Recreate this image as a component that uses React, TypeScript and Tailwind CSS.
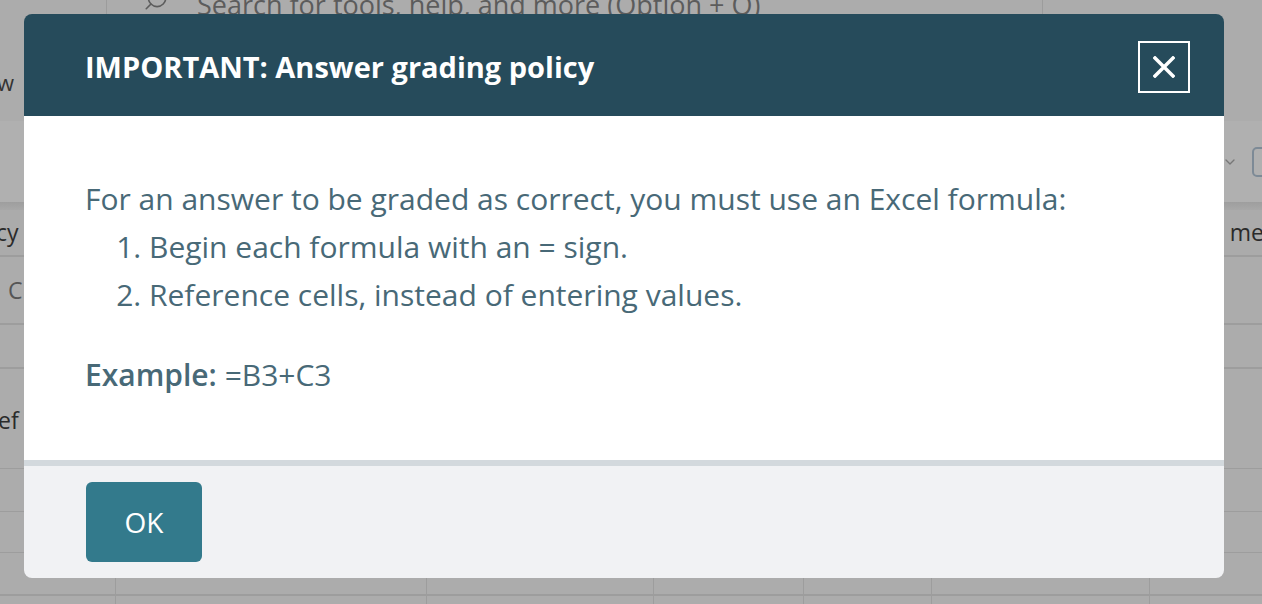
import { Search, ChevronDown } from 'lucide-react';

const font = { fontFamily: '"Open Sans", "Noto Sans", sans-serif' };

function CloseIcon() {
  return (
    <svg viewBox="0 0 22 22" className="h-[22px] w-[22px]" fill="none" stroke="currentColor" strokeWidth={3.5}>
      <path d="M2 2L20 20M20 2L2 20" strokeLinecap="square" />
    </svg>
  );
}

function Backdrop() {
  const cols = [115, 426, 653, 803, 931, 1149];
  return (
    <div className="flex h-[604px] w-full flex-col bg-[#acacac] text-[#2a2a2a]" style={{ fontFamily: '"Open Sans", sans-serif' }}>
      {/* top bar with search */}
      <div className="flex h-[121px] shrink-0">
        <div className="flex w-[107px] shrink-0 items-end border-r border-[#9c9c9c] pb-[22px]">
          <span className="-ml-[3px] text-[22px] text-[#333]">w</span>
        </div>
        <div className="flex h-[16px] w-[936px] shrink-0 items-end gap-[28px] border-r border-[#9c9c9c] pl-[36px]">
          <Search className="mb-[4px] h-[26px] w-[26px] -scale-x-100 text-[#5c5c5c]" strokeWidth={1.5} />
          <span className="-mb-[4px] text-[27px] leading-[30px] text-[#5c5c5c]">Search for tools, help, and more (Option + Q)</span>
        </div>
      </div>
      {/* toolbar */}
      <div className="flex h-[81px] shrink-0 items-center justify-end gap-[14px] bg-[#b0b0b0] pr-0">
        <ChevronDown className="h-[16px] w-[16px] text-[#777]" />
        <div className="-mr-[10px] h-[30px] w-[20px] rounded-[5px] border-2 border-[#7d8a96]" />
      </div>
      <div className="h-[8px] shrink-0 bg-gradient-to-b from-[#9e9e9e] to-[#a8a8a8]" />
      {/* column header row */}
      <div className="flex h-[47px] shrink-0 items-center justify-between border-b-2 border-[#9d9d9d] bg-[#ababab] text-[23px]">
        <span className="-ml-[4px]">cy</span>
        <span className="-mr-[2px]">me</span>
      </div>
      {/* rows */}
      <div className="flex h-[68px] shrink-0 items-center border-b-2 border-[#9d9d9d] text-[23px] text-[#555]">
        <span className="ml-[8px]">C</span>
      </div>
      <div className="h-[44px] shrink-0 border-b-2 border-[#9d9d9d]" />
      <div className="flex h-[100px] shrink-0 items-center border-b border-[#9d9d9d] text-[23px]">
        <span className="-ml-[2px] mt-[4px]">ef</span>
      </div>
      <div className="h-[43px] shrink-0 border-b border-[#9d9d9d]" />
      <div className="h-[41px] shrink-0 border-b border-[#9d9d9d]" />
      <div className="relative h-[43px] shrink-0 border-b-2 border-[#9d9d9d]">
        {cols.map((c) => (
          <div key={c} className="absolute top-0 h-[100px] w-px bg-[#9d9d9d]" style={{ left: c }} />
        ))}
      </div>
    </div>
  );
}

export default function App() {
  return (
    <div className="relative h-[604px] w-full overflow-hidden">
      <Backdrop />
      <div
        className="absolute left-[24px] top-[14px] flex h-[564px] w-[1200px] flex-col overflow-hidden rounded-[8px]"
        style={font}
      >
        <div className="flex h-[102px] shrink-0 items-center justify-between bg-[#264b5b] pl-[61px] pr-[34px] pt-[4px]">
          <h2 className="text-[29px] font-bold text-white">IMPORTANT: Answer grading policy</h2>
          <button className="flex h-[52px] w-[52px] items-center justify-center border-2 border-white text-white">
            <CloseIcon />
          </button>
        </div>
        <div className="flex-1 bg-white pl-[61px] pt-[59px] text-[30px] leading-[48px] text-[#486977]">
          <p>For an answer to be graded as correct, you must use an Excel formula:</p>
          <ol className="list-decimal pl-[64px]">
            <li>Begin each formula with an = sign.</li>
            <li>Reference cells, instead of entering values.</li>
          </ol>
          <p className="mt-[32px]">
            <span className="font-semibold">Example:</span> =B3+C3
          </p>
        </div>
        <div className="h-[6px] shrink-0 bg-[#d3d9dd]" />
        <div className="h-[112px] shrink-0 bg-[#f1f2f4] pl-[62px] pt-[16px]">
          <button className="h-[80px] w-[116px] rounded-[6px] bg-[#337a8c] text-[28px] text-white">OK</button>
        </div>
      </div>
    </div>
  );
}
